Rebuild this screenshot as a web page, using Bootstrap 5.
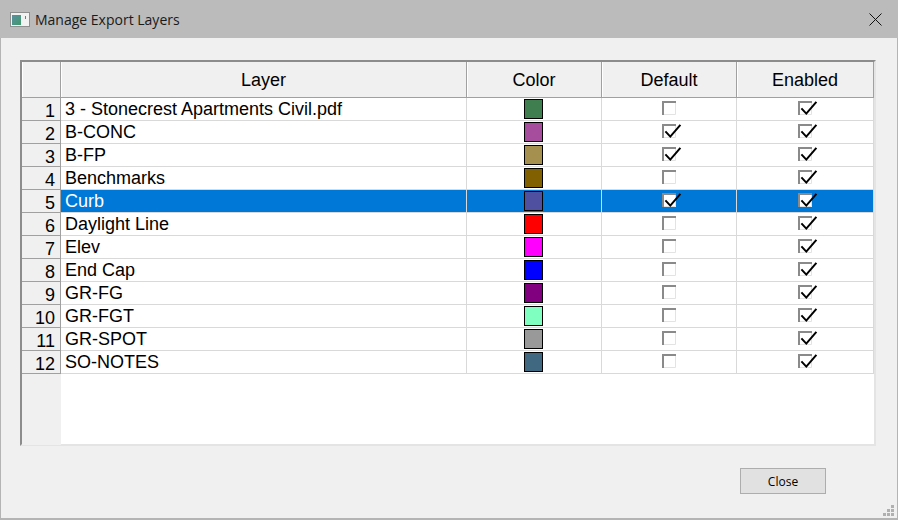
<!DOCTYPE html>
<html lang="en">
<head>
<meta charset="utf-8">
<title>Manage Export Layers</title>
<link href="https://cdn.jsdelivr.net/npm/bootstrap@5.3.0/dist/css/bootstrap.min.css" rel="stylesheet">
<style>
html,body{height:520px;overflow:hidden;background:#f0f0f0}
.win{width:898px;height:520px;border:solid #b4b4b4;border-width:0 1px 2px 1px;background:#f0f0f0;position:relative}
.tbar{height:38px;background:#bbbbbb;margin:0 -1px;padding-left:10px;gap:5px;font:14px "Open Sans","Noto Sans",sans-serif;color:#1a1a1a}
.tbar .xbtn{margin-left:auto;margin-right:16px}
.frame{margin:22px 21px 0 19px;height:386px;border-style:solid;border-width:2px;border-color:#8c8c8c #e4e4e4 #e4e4e4 #8c8c8c;background:#fff}
.lt{border-collapse:separate;border-spacing:0;table-layout:fixed;width:852px;font:18px/1 "Liberation Sans",Arial,sans-serif;color:#000}
.lt th,.lt td{padding:0;vertical-align:middle;overflow:visible}
.lt thead th{height:36px;background:#f0f0f0;font-weight:400;text-align:center;border-right:1px solid #a0a0a0;border-bottom:1px solid #a0a0a0;box-shadow:inset 1px 0 0 #fff}
.lt tbody tr.rw>*{height:23px;border-bottom:1px solid #d9d9d9;border-right:1px solid #d9d9d9}
.lt tbody tr.rw>th{background:#f0f0f0;font-weight:400;text-align:right;padding-right:5px;border-bottom-color:#a0a0a0;border-right-color:#a0a0a0;padding-top:3px}
.nm{padding-left:4px!important}
.mid{text-align:center}
.sw{display:inline-block;width:19px;height:20px;border:1px solid #000;vertical-align:middle;margin:-1px 2px 0 0}
.cb{width:14px;height:14px;overflow:visible;vertical-align:middle;display:inline-block;margin-top:-4px}
tr.sel>td{background:#0078d7;color:#fff}
.gut{background:#f0f0f0;height:71px}
.ftr{margin:22px 71px 0 0}
.btn.closeb{width:86px;height:26px;padding:0;background:#e1e1e1;border:1px solid #adadad;border-radius:0;font:12px "Open Sans","Noto Sans",sans-serif;color:#000}
.grip{position:absolute;right:2px;bottom:1px}
</style>
</head>
<body>
<svg width="0" height="0" class="position-absolute">
  <defs>
    <g id="bx">
      <rect x="0" y="0" width="14" height="14" fill="#fff"/>
      <path d="M1 14V1H14" fill="none" stroke="#8a8a8a" stroke-width="2"/>
      <path d="M13.5 2V13.5H2" fill="none" stroke="#e3e3e3" stroke-width="1"/>
    </g>
    <g id="ck">
      <use href="#bx"/>
      <path d="M3.4 7.4L8.3 12.6L18.4 .8" fill="none" stroke="#000" stroke-width="2"/>
    </g>
  </defs>
</svg>
<div class="win">
  <div class="tbar d-flex align-items-center">
    <svg width="20" height="15" viewBox="0 0 20 15" aria-hidden="true">
      <defs><linearGradient id="gi" x1="0" y1="0" x2="1" y2="1"><stop offset="0" stop-color="#5a8fa0"/><stop offset="1" stop-color="#3f9a6a"/></linearGradient></defs>
      <rect x=".5" y=".5" width="19" height="14" fill="#f2f2f2" stroke="#8f8f8f"/>
      <rect x="2" y="3" width="9" height="10" fill="url(#gi)"/>
      <rect x="15" y="4" width="1" height="3" fill="#3f8f9f"/>
    </svg>
    <span>Manage Export Layers</span>
    <svg class="xbtn" width="13" height="13" viewBox="0 0 13 13" aria-hidden="true"><path d="M.5 .5L12.5 12.5M12.5 .5L.5 12.5" stroke="#111" stroke-width="1" fill="none"/></svg>
  </div>
  <div class="frame">
    <table class="lt">
      <colgroup><col style="width:39px"><col style="width:406px"><col style="width:135px"><col style="width:135px"><col style="width:137px"></colgroup>
      <thead><tr><th></th><th>Layer</th><th>Color</th><th>Default</th><th>Enabled</th></tr></thead>
      <tbody>
        <tr class="rw"><th>1</th><td class="nm">3 - Stonecrest Apartments Civil.pdf</td><td class="mid"><span class="sw" style="background:#3f7f4f"></span></td><td class="mid"><svg class="cb"><use href="#bx"/></svg></td><td class="mid"><svg class="cb"><use href="#ck"/></svg></td></tr>
        <tr class="rw"><th>2</th><td class="nm">B-CONC</td><td class="mid"><span class="sw" style="background:#a64d9d"></span></td><td class="mid"><svg class="cb"><use href="#ck"/></svg></td><td class="mid"><svg class="cb"><use href="#ck"/></svg></td></tr>
        <tr class="rw"><th>3</th><td class="nm">B-FP</td><td class="mid"><span class="sw" style="background:#a69050"></span></td><td class="mid"><svg class="cb"><use href="#ck"/></svg></td><td class="mid"><svg class="cb"><use href="#ck"/></svg></td></tr>
        <tr class="rw"><th>4</th><td class="nm">Benchmarks</td><td class="mid"><span class="sw" style="background:#806000"></span></td><td class="mid"><svg class="cb"><use href="#bx"/></svg></td><td class="mid"><svg class="cb"><use href="#ck"/></svg></td></tr>
        <tr class="rw sel"><th>5</th><td class="nm">Curb</td><td class="mid"><span class="sw" style="background:#5050a0"></span></td><td class="mid"><svg class="cb"><use href="#ck"/></svg></td><td class="mid"><svg class="cb"><use href="#ck"/></svg></td></tr>
        <tr class="rw"><th>6</th><td class="nm">Daylight Line</td><td class="mid"><span class="sw" style="background:#ff0000"></span></td><td class="mid"><svg class="cb"><use href="#bx"/></svg></td><td class="mid"><svg class="cb"><use href="#ck"/></svg></td></tr>
        <tr class="rw"><th>7</th><td class="nm">Elev</td><td class="mid"><span class="sw" style="background:#ff00ff"></span></td><td class="mid"><svg class="cb"><use href="#bx"/></svg></td><td class="mid"><svg class="cb"><use href="#ck"/></svg></td></tr>
        <tr class="rw"><th>8</th><td class="nm">End Cap</td><td class="mid"><span class="sw" style="background:#0000ff"></span></td><td class="mid"><svg class="cb"><use href="#bx"/></svg></td><td class="mid"><svg class="cb"><use href="#ck"/></svg></td></tr>
        <tr class="rw"><th>9</th><td class="nm">GR-FG</td><td class="mid"><span class="sw" style="background:#800080"></span></td><td class="mid"><svg class="cb"><use href="#bx"/></svg></td><td class="mid"><svg class="cb"><use href="#ck"/></svg></td></tr>
        <tr class="rw"><th>10</th><td class="nm">GR-FGT</td><td class="mid"><span class="sw" style="background:#7fffc0"></span></td><td class="mid"><svg class="cb"><use href="#bx"/></svg></td><td class="mid"><svg class="cb"><use href="#ck"/></svg></td></tr>
        <tr class="rw"><th>11</th><td class="nm">GR-SPOT</td><td class="mid"><span class="sw" style="background:#999999"></span></td><td class="mid"><svg class="cb"><use href="#bx"/></svg></td><td class="mid"><svg class="cb"><use href="#ck"/></svg></td></tr>
        <tr class="rw"><th>12</th><td class="nm">SO-NOTES</td><td class="mid"><span class="sw" style="background:#406880"></span></td><td class="mid"><svg class="cb"><use href="#bx"/></svg></td><td class="mid"><svg class="cb"><use href="#ck"/></svg></td></tr>
        <tr><th class="gut"></th><td colspan="4"></td></tr>
      </tbody>
    </table>
  </div>
  <div class="ftr d-flex justify-content-end">
    <button type="button" class="btn closeb">Close</button>
  </div>
  <svg class="grip" width="12" height="12" viewBox="0 0 12 12" aria-hidden="true"><path fill="#b0b0b0" d="M8 0h3v3H8zM4 4h3v3H4zM8 4h3v3H8zM0 8h3v3H0zM4 8h3v3H4zM8 8h3v3H8z"/></svg>
</div>
</body>
</html>
